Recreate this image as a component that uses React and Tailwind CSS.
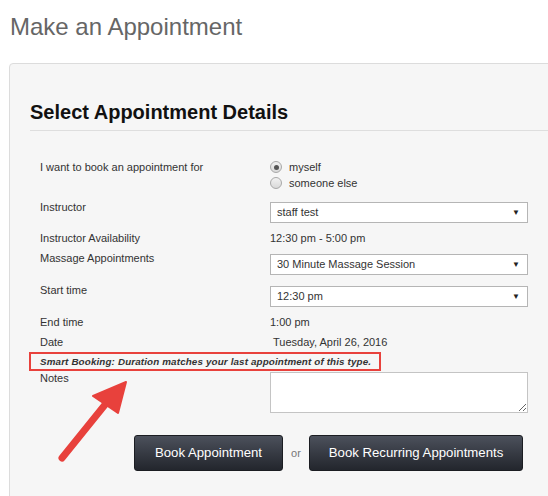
import React from 'react';

const font = { fontFamily: '"Liberation Sans", Arial, sans-serif' };

function Select({ value }) {
  return (
    <div className="flex items-center justify-between w-[258px] h-[21px] bg-white border border-[#b5b5b5] pl-[6px] pr-[7px] text-[11px] text-[#333]">
      <span>{value}</span>
      <span className="text-[8px] text-[#222]">▼</span>
    </div>
  );
}

function Radio({ checked }) {
  return (
    <span className="w-[12px] h-[12px] rounded-full border border-[#a8a8a8] bg-gradient-to-b from-[#f2f2f2] to-[#d9d9d9] flex items-center justify-center">
      {checked && <span className="w-[5px] h-[5px] rounded-full bg-[#555]" />}
    </span>
  );
}

function Row({ label, h, children, labelTop = 0 }) {
  return (
    <div className="flex" style={{ height: h }}>
      <div className="w-[230px] text-[11px] leading-[13px] text-[#333]" style={{ paddingTop: labelTop }}>{label}</div>
      <div className="flex-1">{children}</div>
    </div>
  );
}

export default function App() {
  return (
    <div className="relative w-[548px] h-[496px] overflow-hidden bg-white" style={font}>
      <h1 className="pl-[10px] pt-[13px] text-[24px] leading-[28px] text-[#666]">Make an Appointment</h1>

      {/* panel */}
      <div className="mt-[22px] ml-[9px] w-[580px] h-[500px] border border-[#dcdcdc] rounded-[4px] bg-[#f6f6f6]">
        <div className="pl-[20px] pt-[36px]">
          <h2 className="text-[20px] leading-[24px] font-bold text-[#111] pb-[6px] border-b border-[#dedede]">Select Appointment Details</h2>
        </div>

        <div className="pl-[30px] pt-[30px]">
          <Row label="I want to book an appointment for" h={39}>
            <div className="-mt-[2px]">
              <label className="flex items-center gap-[7px] h-[16px] text-[11px] text-[#333]"><Radio checked />myself</label>
              <label className="flex items-center gap-[7px] h-[16px] text-[11px] text-[#333]"><Radio />someone else</label>
            </div>
          </Row>
          <Row label="Instructor" h={32} labelTop={0.5}>
            <div className="pt-[2px]"><Select value="staff test" /></div>
          </Row>
          <Row label="Instructor Availability" h={20}>
            <div className="text-[11px] leading-[13px] text-[#333]">12:30 pm - 5:00 pm</div>
          </Row>
          <Row label="Massage Appointments" h={32}>
            <div className="pt-[2px]"><Select value="30 Minute Massage Session" /></div>
          </Row>
          <Row label="Start time" h={32}>
            <div className="pt-[2px]"><Select value="12:30 pm" /></div>
          </Row>
          <Row label="End time" h={20}>
            <div className="text-[11px] leading-[13px] text-[#333]">1:00 pm</div>
          </Row>
          <Row label="Date" h={16}>
            <div className="pl-[3px] text-[11px] leading-[13px] text-[#333]">Tuesday, April 26, 2016</div>
          </Row>

          <div className="-ml-[11px] w-[352px] h-[19px] border-[2.5px] border-[#e8413c] pl-[9px] pt-[1px] flex items-center text-[9.8px] font-bold italic text-[#333] tracking-[0.15px]">
            Smart Booking: Duration matches your last appointment of this type.
          </div>

          <div className="flex pt-[1px]">
            <div className="w-[230px] text-[11px] leading-[13px] text-[#333]">Notes</div>
            <textarea className="w-[258px] h-[41px] bg-white border border-[#c4c4c4] outline-none" />
          </div>

          <div className="flex items-center pl-[94px] pt-[22px]">
            <button className="w-[149px] h-[36px] rounded-[3px] border border-[#1b1d22] bg-gradient-to-b from-[#4c515c] to-[#23262d] text-white text-[13.2px]">Book Appointment</button>
            <span className="w-[26px] text-center text-[11px] text-[#777]">or</span>
            <button className="w-[214px] h-[36px] rounded-[3px] border border-[#1b1d22] bg-gradient-to-b from-[#4c515c] to-[#23262d] text-white text-[13.2px]">Book Recurring Appointments</button>
          </div>
        </div>
      </div>

      {/* annotation arrow */}
      <svg className="absolute left-0 top-0 pointer-events-none" width="548" height="496">
        <line x1="62" y1="458" x2="108" y2="401" stroke="#e8413c" strokeWidth="7" strokeLinecap="round" />
        <polygon points="126,382 93,396 118,413" fill="#e8413c" stroke="#e8413c" strokeWidth="2" strokeLinejoin="round" />
      </svg>
    </div>
  );
}
